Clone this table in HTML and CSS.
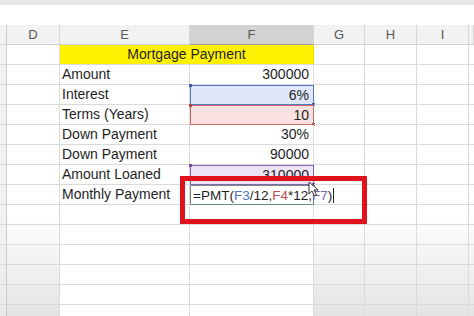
FILE: index.html
```html
<!DOCTYPE html>
<html>
<head>
<meta charset="utf-8">
<link rel="stylesheet" href="styles.css">
</head>
<body>
<div class="top"></div>
<div class="blank"></div>
<div class="sheet">
  <div class="rh hdr"></div><div class="ch">D</div><div class="ch">E</div><div class="ch sel">F</div><div class="ch">G</div><div class="ch">H</div><div class="ch">I</div><div class="ch end"></div>

  <div class="rh"></div><div class="c"></div><div class="c title">Mortgage Payment</div><div class="c"></div><div class="c"></div><div class="c"></div><div class="c end"></div>

  <div class="rh"></div><div class="c"></div><div class="c lbl">Amount</div><div class="c num">300000</div><div class="c"></div><div class="c"></div><div class="c"></div><div class="c end"></div>

  <div class="rh"></div><div class="c"></div><div class="c lbl">Interest</div><div class="c num ref blue">6%</div><div class="c"></div><div class="c"></div><div class="c"></div><div class="c end"></div>

  <div class="rh"></div><div class="c"></div><div class="c lbl">Terms (Years)</div><div class="c num ref red">10</div><div class="c"></div><div class="c"></div><div class="c"></div><div class="c end"></div>

  <div class="rh"></div><div class="c"></div><div class="c lbl">Down Payment</div><div class="c num">30%</div><div class="c"></div><div class="c"></div><div class="c"></div><div class="c end"></div>

  <div class="rh"></div><div class="c"></div><div class="c lbl">Down Payment</div><div class="c num">90000</div><div class="c"></div><div class="c"></div><div class="c"></div><div class="c end"></div>

  <div class="rh"></div><div class="c"></div><div class="c lbl">Amount Loaned</div><div class="c num ref purple">310000</div><div class="c"></div><div class="c"></div><div class="c"></div><div class="c end"></div>

  <div class="rh"></div><div class="c"></div><div class="c lbl">Monthly Payment</div><div class="c active"><span class="formula">=PMT(<span class="fb">F3</span>/12,<span class="fr">F4</span>*12,<span class="fp">F7</span>)<span class="caret"></span></span></div><div class="c"></div><div class="c"></div><div class="c"></div><div class="c end"></div>

  <div class="rh"></div><div class="c"></div><div class="c"></div><div class="c"></div><div class="c"></div><div class="c"></div><div class="c"></div><div class="c end"></div>
  <div class="rh"></div><div class="c"></div><div class="c"></div><div class="c"></div><div class="c"></div><div class="c"></div><div class="c"></div><div class="c end"></div>
  <div class="rh"></div><div class="c"></div><div class="c"></div><div class="c"></div><div class="c"></div><div class="c"></div><div class="c"></div><div class="c end"></div>
  <div class="rh"></div><div class="c"></div><div class="c"></div><div class="c"></div><div class="c"></div><div class="c"></div><div class="c"></div><div class="c end"></div>
  <div class="rh"></div><div class="c"></div><div class="c"></div><div class="c"></div><div class="c"></div><div class="c"></div><div class="c"></div><div class="c end"></div>
  <div class="rh"></div><div class="c"></div><div class="c"></div><div class="c"></div><div class="c"></div><div class="c"></div><div class="c"></div><div class="c end"></div>
</div>
<div class="redbox"></div>
<svg class="pointer" width="12" height="16" viewBox="0 0 12 16">
  <path d="M1 1 L1 13 L4 10 L6.5 15 L8.5 14 L6 9 L10 9 Z" fill="#fff" stroke="#333" stroke-width="1"/>
</svg>
</body>
</html>
```

FILE: styles.css
```css
html, body {
  margin: 0;
  padding: 0;
}
body {
  width: 474px;
  height: 316px;
  overflow: hidden;
  position: relative;
  font-family: "Liberation Sans", Arial, sans-serif;
  color: #1e1e1e;
  background: linear-gradient(to bottom, #ffffff 0px, #ffffff 215px, #f3f3f3 260px, #e3e3e3 316px);
}
.top {
  height: 5px;
  background: #e7e7e7;
}
.blank {
  height: 20px;
  background: #fff;
}
.sheet {
  display: grid;
  grid-template-columns: 7px 53px 130px 124px 51px 52px 52px 5px;
  grid-auto-rows: 20px;
}
.sheet > div {
  box-sizing: border-box;
  border-right: 1px solid #dadada;
  border-bottom: 1px solid #dadada;
  font-size: 14px;
  line-height: 19px;
  white-space: nowrap;
  position: relative;
}
.rh {
  background: rgba(236, 236, 236, 0.7);
  border-right: 1px solid #c9c9c9 !important;
}
.ch {
  background: #f2f2f2;
  text-align: center;
  font-size: 13px !important;
  color: #555;
  border-bottom: 1px solid #cfcfcf !important;
  border-right: 1px solid #d6d6d6 !important;
}
.ch.sel {
  background: #d3d3d3;
  border-bottom: 1px solid #9c9c9c !important;
}
.c.end, .ch.end {
  border-right: none;
}
.c:nth-child(8n+2), .c:nth-child(8n+3) {
  background: #fff;
}
.title {
  grid-column: span 2;
  background: #fff200 !important;
  text-align: center;
  font-size: 14px;
  border-right: 1px solid #e0d800 !important;
}
.lbl {
  padding-left: 2px;
  background: #fff;
}
.num {
  text-align: right;
  padding-right: 4px;
  background: #fff;
}
.ref.blue {
  background: #dfe8f8;
  border: 1px solid #5678bd;
}
.ref.red {
  background: #fbe2e2;
  border: 1px solid #c86a6a;
}
.ref.purple {
  background: #ece4f6;
  border: 1px solid #8468ad;
}
.ref::before, .ref::after {
  content: "";
  position: absolute;
  width: 3px;
  height: 3px;
}
.ref.blue::before, .ref.blue::after { background: #3d5fa8; }
.ref.red::before, .ref.red::after { background: #b04848; }
.ref.purple::before, .ref.purple::after { background: #6c4f9a; }
.ref::before { left: -2px; top: -2px; }
.ref::after { right: -2px; bottom: -2px; }
.active {
  background: #fff;
  border: 1px solid #6f8f7c !important;
  overflow: visible;
  z-index: 2;
}
.formula {
  position: absolute;
  left: 2px;
  top: 0;
  font-size: 13.5px;
  color: #1e1e1e;
}
.fb { color: #4a78c0; }
.fr { color: #c0504d; }
.fp { color: #7a63b0; }
.caret {
  display: inline-block;
  width: 1px;
  height: 15px;
  background: #222;
  vertical-align: -3px;
  margin-left: 1px;
}
.redbox {
  position: absolute;
  left: 180px;
  top: 176px;
  width: 187px;
  height: 48px;
  box-sizing: border-box;
  border: 5px solid #e0121c;
  z-index: 5;
}
.pointer {
  position: absolute;
  left: 308px;
  top: 181px;
  z-index: 6;
}
```
